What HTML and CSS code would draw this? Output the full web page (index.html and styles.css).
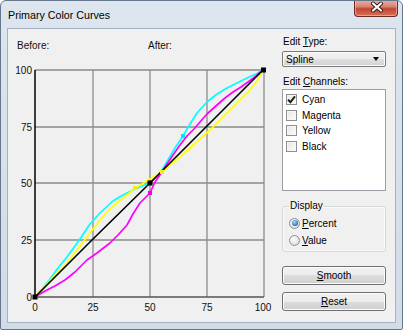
FILE: index.html
```html
<!DOCTYPE html>
<html lang="en">
<head>
    <meta charset="UTF-8">
    <meta name="viewport" content="width=device-width, initial-scale=1.0">
    <title>Primary Color Curves</title>
    <link rel="stylesheet" href="styles.css">
</head>
<body>
    <div class="window">
        <div class="title-bar">
            <span class="title">Primary Color Curves</span>
            <div class="close-btn">
                <svg width="44" height="17" viewBox="0 0 44 17">
                    <path d="M18,4.5 L26,11.5 M26,4.5 L18,11.5" stroke="#3a1712" stroke-width="4" stroke-linecap="round"/>
                    <path d="M18,4.5 L26,11.5 M26,4.5 L18,11.5" stroke="#ffffff" stroke-width="2.2" stroke-linecap="round"/>
                </svg>
            </div>
        </div>
        <div class="client">
            <svg class="chart" width="267" height="293" viewBox="8 29 267 293">
                <text x="17" y="49">Before:</text>
                <text x="148" y="49">After:</text>

                <g class="grid">
                    <line x1="35" y1="70" x2="264" y2="70"/>
                    <line x1="35" y1="127" x2="264" y2="127"/>
                    <line x1="35" y1="183" x2="264" y2="183"/>
                    <line x1="35" y1="240" x2="264" y2="240"/>
                    <line x1="93" y1="70" x2="93" y2="297"/>
                    <line x1="150" y1="70" x2="150" y2="297"/>
                    <line x1="207" y1="70" x2="207" y2="297"/>
                    <line x1="264" y1="70" x2="264" y2="297"/>
                </g>
                <line class="axis-x" x1="35" y1="297" x2="264" y2="297"/>
                <line class="axis-y" x1="35" y1="70" x2="35" y2="297"/>

                <g class="y-labels">
                    <text x="32" y="73.5">100</text>
                    <text x="32" y="130.5">75</text>
                    <text x="32" y="186.5">50</text>
                    <text x="32" y="243.5">25</text>
                    <text x="32" y="300.5">0</text>
                </g>
                <g class="x-labels">
                    <text x="35" y="311">0</text>
                    <text x="93" y="311">25</text>
                    <text x="150" y="311">50</text>
                    <text x="207" y="311">75</text>
                    <text x="263" y="311">100</text>
                </g>

                <!-- channel curves -->
                <polyline class="curve cyan" points="35,297 42,289 50,279 58,268 67,257 75,246 82,236 90,224 100,213 113,201 123,195 133,190 142,186 150,183 156,177 162,170 168,160 175,148 183,136 190,124 197,113 207,102 217,94 227,88 237,83 247,78 256,74 263,70"/>
                <polyline class="curve magenta" points="35,297 45,291 55,286 65,280 75,272 87,260 97,253 110,243 118,235 127,225 133,214 140,203 145,198 150,193 155,182 162,172 167,164 173,155 180,145 187,136 194,129 200,122 207,114 217,105 225,98 233,92 241,87 248,82 256,76 263,70"/>
                <polyline class="curve yellow" points="35,297 43,288 55,275 67,263 80,246 93,229 100,220 108,211 117,203 127,195 135,188 142,184 148,180 155,176 162,172 170,165 180,157 190,148 200,139 210,130 220,120 230,110 240,100 250,90 257,81 263,70"/>
                <polyline class="curve black" points="35,297 92,240 150,183 207,126 263,70"/>

                <rect class="pt-cyan" x="181" y="134" width="4" height="4"/>
                <rect class="pt-yellow" x="133" y="186" width="4" height="4"/>
                <rect class="pt-yellow" x="160" y="170" width="4" height="4"/>
                <rect class="pt-magenta" x="148" y="191" width="4" height="4"/>
                <rect class="pt-black" x="32.5" y="294.5" width="5" height="5"/>
                <rect class="pt-black" x="147.5" y="180.5" width="5" height="5"/>
                <rect class="pt-black" x="261" y="67.5" width="5" height="5"/>
            </svg>

            <div class="side-panel">
                <div class="label first">Edit <u>T</u>ype:</div>
                <div class="dropdown">
                    <span>Spline</span>
                    <span class="arrow"></span>
                </div>
                <div class="label channels-label">Edit <u>C</u>hannels:</div>
                <div class="channel-list">
                    <div class="channel">
                        <span class="checkbox">
                            <svg width="9" height="9" viewBox="0 0 9 9">
                                <path d="M1,4.6 L3.4,7.2 L8,1.4" fill="none" stroke="#1c1c1c" stroke-width="1.9"/>
                            </svg>
                        </span>
                        <span>Cyan</span>
                    </div>
                    <div class="channel"><span class="checkbox"></span><span>Magenta</span></div>
                    <div class="channel"><span class="checkbox"></span><span>Yellow</span></div>
                    <div class="channel"><span class="checkbox"></span><span>Black</span></div>
                </div>
                <fieldset class="group">
                    <legend>Display</legend>
                    <div class="radio-row"><span class="radio checked"></span><span><u>P</u>ercent</span></div>
                    <div class="radio-row"><span class="radio"></span><span><u>V</u>alue</span></div>
                </fieldset>
                <button class="btn smooth-btn"><u>S</u>mooth</button>
                <button class="btn reset-btn"><u>R</u>eset</button>
            </div>
        </div>
    </div>
</body>
</html>
```

FILE: styles.css
```css
body {
    margin: 0;
    font-family: "Liberation Sans", Arial, sans-serif;
    font-size: 10px;
    color: #000;
}

.window {
    width: 403px;
    height: 330px;
    box-sizing: border-box;
    border: 1px solid #65758a;
    border-radius: 6px 6px 2px 2px;
    background: linear-gradient(#dde5ee, #d1dce8);
    padding: 0 6px 6px;
    display: flex;
    flex-direction: column;
    overflow: hidden;
}

.title-bar {
    height: 27px;
    display: flex;
    align-items: flex-start;
}

.title {
    font-size: 10.7px;
    line-height: 12px;
    margin-top: 7.5px;
    padding-left: 1px;
}

.close-btn {
    margin-left: auto;
    margin-right: -2px;
    margin-top: -1px;
    width: 44px;
    height: 17px;
    box-sizing: border-box;
    border: 1px solid #6b2b22;
    border-top: none;
    border-radius: 0 0 4px 4px;
    background: linear-gradient(#e7b1a7 0%, #d98576 40%, #c4462f 55%, #d4715c 100%);
    box-shadow: inset 0 0 0 1px rgba(255, 210, 200, 0.5);
}

.close-btn svg {
    display: block;
    margin-top: -1px;
}

.client {
    flex: 1;
    display: flex;
    background-color: #f0f0f0;
    border: 1px solid #a6b2bf;
}

.chart {
    display: block;
    flex-shrink: 0;
}

.chart text {
    font-family: "Liberation Sans", Arial, sans-serif;
    font-size: 10px;
    fill: #111;
}

.y-labels text {
    text-anchor: end;
}

.x-labels text {
    text-anchor: middle;
}

.grid line {
    stroke: #8b8b8b;
    stroke-width: 1.3;
}

.axis-x {
    stroke: #555;
    stroke-width: 1.3;
}

.axis-y {
    stroke: #000;
    stroke-width: 1.5;
}

.curve {
    fill: none;
    stroke-width: 1.7;
    stroke-linejoin: round;
}

.curve.cyan { stroke: #00ffff; }
.curve.magenta { stroke: #ff00ff; }
.curve.yellow { stroke: #ffff00; }
.curve.black { stroke: #000; stroke-width: 1.6; }

.pt-cyan { fill: #00e5f0; }
.pt-yellow { fill: #f0f000; }
.pt-magenta { fill: #f000f0; }
.pt-black { fill: #000; }

.side-panel {
    width: 104px;
    margin-left: 7px;
    display: flex;
    flex-direction: column;
}

.label {
    line-height: 12px;
    padding-left: 1px;
}

.label.first {
    margin-top: 6.5px;
}

.channels-label {
    margin-top: 8.5px;
}

.dropdown {
    margin-top: 3.5px;
    height: 16px;
    box-sizing: border-box;
    border: 1px solid #7a7a7a;
    border-radius: 2px;
    background: linear-gradient(#f3f3f3 0%, #ececec 50%, #dfdfdf 50%, #d2d2d2 100%);
    box-shadow: inset 0 0 0 1px #fbfbfb;
    display: flex;
    align-items: center;
    padding: 0 6px 0 3px;
}

.arrow {
    margin-left: auto;
    width: 0;
    height: 0;
    border-left: 3.5px solid transparent;
    border-right: 3.5px solid transparent;
    border-top: 4px solid #000;
}

.channel-list {
    margin-top: 1.5px;
    height: 102px;
    box-sizing: border-box;
    border: 1px solid #9a9fa6;
    background-color: #fff;
    padding: 2px 0 0 3px;
}

.channel {
    height: 15.6px;
    display: flex;
    align-items: center;
    gap: 5px;
}

.checkbox {
    width: 11px;
    height: 11px;
    box-sizing: border-box;
    border: 1px solid #8e8f8f;
    background: linear-gradient(135deg, #e4e4e4, #ffffff);
    box-shadow: inset 0 0 0 1px #f6f6f6;
    display: flex;
    align-items: center;
    justify-content: center;
}

.group {
    margin: 9px 0 0;
    padding: 2.6px 0 1.3px 6px;
    border: 1px solid #d3d8dd;
    border-radius: 3px;
    box-shadow: inset 0 0 0 1px #fafafa;
}

.group legend {
    padding: 0 1px;
    line-height: 12px;
}

.radio-row {
    height: 17.4px;
    display: flex;
    align-items: center;
    gap: 2px;
}

.radio {
    width: 11px;
    height: 11px;
    box-sizing: border-box;
    border-radius: 50%;
    border: 1px solid #8e8f8f;
    background: radial-gradient(circle at 40% 35%, #ffffff, #d2d2d2);
    display: flex;
    align-items: center;
    justify-content: center;
}

.radio.checked::after {
    content: "";
    width: 6px;
    height: 6px;
    border-radius: 50%;
    background: radial-gradient(circle at 40% 35%, #a6dcff, #2a6fb8 70%, #1b4f8e);
}

.btn {
    height: 19px;
    box-sizing: border-box;
    border: 1px solid #707070;
    border-radius: 3px;
    background: linear-gradient(#f2f2f2 0%, #ebebeb 50%, #dddddd 50%, #cfcfcf 100%);
    box-shadow: inset 0 0 0 1px #fcfcfc;
    font-family: inherit;
    font-size: 10px;
    color: #000;
    padding: 0;
}

.smooth-btn {
    margin-top: 14px;
}

.reset-btn {
    margin-top: 7.3px;
}
```
